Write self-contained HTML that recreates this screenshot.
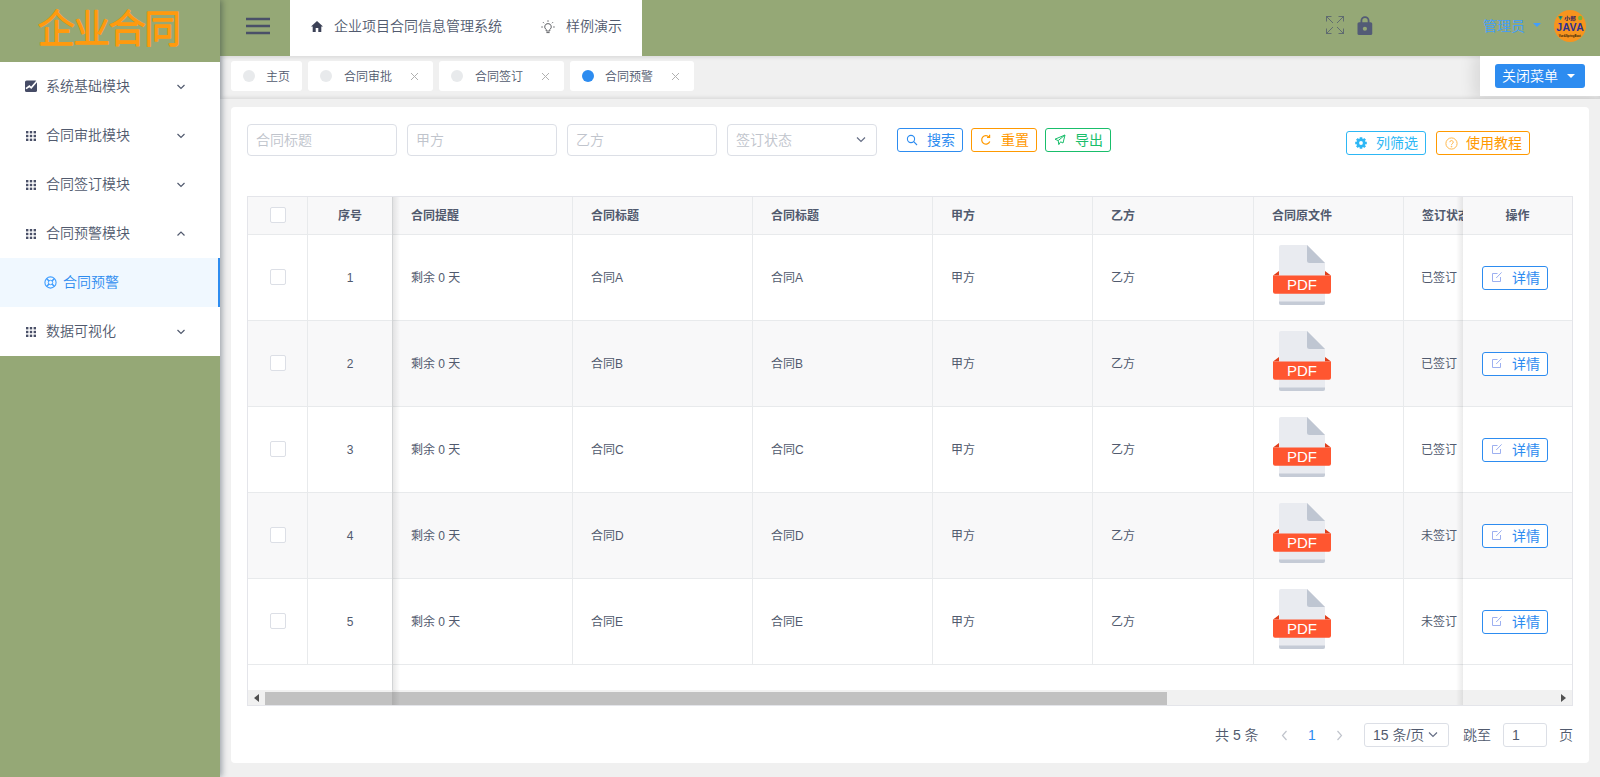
<!DOCTYPE html>
<html lang="zh-CN">
<head>
<meta charset="utf-8">
<title>企业项目合同信息管理系统</title>
<style>
*{box-sizing:border-box;margin:0;padding:0}
html,body{width:1600px;height:777px;overflow:hidden}
body{font-family:"Liberation Sans","Noto Sans CJK SC",sans-serif;font-weight:350;font-size:14px;color:#606266;background:#f0f0f0;position:relative}
.abs{position:absolute}
/* sidebar */
#side{position:absolute;left:0;top:0;width:220px;height:777px;background:#95a876;box-shadow:2px 0 6px rgba(0,21,41,.35);z-index:20}
#logo{position:absolute;left:0;top:0;width:220px;height:62px;text-align:center;line-height:0;font-size:0;color:#ff9a0e;font-family:"Liberation Sans","WenQuanYi Zen Hei","Noto Sans CJK SC",sans-serif;letter-spacing:-1px}
#menu{position:absolute;left:0;top:62px;width:220px;height:294px;background:#fff}
.mi{position:absolute;left:0;width:220px;height:49px;line-height:49px;font-size:14px;color:#515a6e}
.mi .tx{position:absolute;left:46px;top:0}
.mi svg.ic{position:absolute;left:25px;top:19px}
.mi svg.ar{position:absolute;left:176px;top:20px}
.mi.sub{background:#ecf5ff;color:#2d8cf0;border-right:2px solid #2d8cf0;background:#f0f8ff}
.mi.sub .tx{left:63px}
/* header */
#top{position:absolute;left:220px;top:0;width:1380px;height:56px;background:#95a876;z-index:10}
#nav{position:absolute;left:70px;top:0;width:352px;height:56px;background:#fff;font-size:14px;color:#515a6e;line-height:52px}
/* tags */
#tags{position:absolute;left:220px;top:56px;width:1380px;height:43px;background:#f0f0f0;box-shadow:inset 0 0 3px 2px rgba(100,100,100,.13);overflow:hidden}
.tag{position:absolute;top:5px;height:30px;background:#fff;border-radius:3px;font-size:12px;color:#515a6e;line-height:30px}
.tag .dot{position:absolute;left:12px;top:9px;width:12px;height:12px;border-radius:50%;background:#e8eaec}
.tag .dot.on{background:#2d8cf0}
.tag .t{position:absolute;top:1px}
.tag svg{position:absolute;top:11px}
#tagr{position:absolute;left:1260px;top:0;width:120px;height:40px;background:#fff;box-shadow:-3px 0 15px 3px rgba(0,0,0,.1)}
#closebtn{position:absolute;left:15px;top:8px;width:90px;height:24px;background:#2d8cf0;border-radius:3px;color:#fff;font-size:14px;line-height:24px}
/* card */
#card{position:absolute;left:231px;top:107px;width:1358px;height:656px;background:#fff;border-radius:4px}
.inp{position:absolute;top:124px;height:32px;width:150px;border:1px solid #dcdfe6;border-radius:4px;background:#fff;font-size:14px;color:#c0c4cc;line-height:30px;padding-left:8px}
.btn{position:absolute;height:24px;border:1px solid;border-radius:3px;background:#fff;font-size:14px;line-height:22px;font-weight:400}
.btn .t{position:absolute;top:0}
.btn svg{position:absolute}
/* table */
#tbl{position:absolute;left:247px;top:196px;width:1326px;height:510px;border:1px solid #e4e5ea;background:#fff;overflow:hidden}
.row{position:absolute;left:0;width:1324px;height:86px;border-bottom:1px solid #e8eaec;background:#fff}
.row.alt{background:#f8f8f9}
.hd{position:absolute;left:0;top:0;width:1324px;height:38px;background:#f8f8f9;border-bottom:1px solid #e8eaec;font-weight:bold;color:#515a6e;font-size:12px}
.c{position:absolute;top:0;height:100%;border-right:1px solid #e8eaec;font-size:12px;color:#515a6e;padding-left:18px;display:flex;align-items:center;line-height:18px;font-weight:400}
.hd .c{color:#515a6e;padding-bottom:0;font-weight:bold}
.hd .c9{padding-left:18px}
.c.ctr{padding-left:0;justify-content:center}
.cb{width:16px;height:16px;border:1px solid #dcdfe6;border-radius:2px;background:#fff;position:relative;top:-1px}
.pdf{position:absolute;left:19px;top:10px}
.row .c{padding-bottom:0}
.row .c10{padding-right:5px;padding-bottom:0}
.c1{left:0;width:60px}.c2{left:60px;width:85px}.c3{left:145px;width:180px}.c4{left:325px;width:180px}.c5{left:505px;width:180px}.c6{left:685px;width:160px}.c7{left:845px;width:161px}.c8{left:1006px;width:150px}.c9{left:1156px;width:120px;white-space:nowrap;overflow:hidden;padding-left:17px}.c10{left:1215px;width:109px;border-right:none;background:inherit;z-index:2}
.det{width:66px;height:24px;border:1px solid #2d8cf0;border-radius:3px;color:#2d8cf0;font-size:14px;position:relative;line-height:22px;background:#fff}
.det .t{position:absolute;left:29px;top:0}
.det svg{position:absolute;left:8px;top:4px}
#fixl{position:absolute;left:392px;top:197px;width:8px;height:508px;background:linear-gradient(to right,rgba(0,0,0,.10),rgba(0,0,0,0));pointer-events:none}
#fixr{position:absolute;left:1456px;top:197px;width:7px;height:508px;background:linear-gradient(to left,rgba(0,0,0,.08),rgba(0,0,0,0));pointer-events:none}
#sb{position:absolute;left:0;top:493px;width:1324px;height:15px;background:#f1f1f1}
#sbt{position:absolute;left:17px;top:2px;width:902px;height:13px;background:#c1c1c1}
/* pagination */
.pg{position:absolute;font-size:14px;color:#515a6e;line-height:24px;top:723px;white-space:nowrap}
.pbox{position:absolute;top:723px;height:24px;border:1px solid #dcdfe6;border-radius:3px;background:#fff;font-size:14px;color:#515a6e;line-height:22px}
</style>
</head>
<body>

<!-- SIDEBAR -->
<div id="side">
  <div id="logo"><svg width="220" height="62" viewBox="0 0 220 62"><text x="109" y="42" text-anchor="middle" font-family="Noto Sans CJK SC, sans-serif" font-size="38" font-weight="300" textLength="142" lengthAdjust="spacingAndGlyphs" fill="#ff9a0e" stroke="#ff9a0e" stroke-width="2" stroke-linejoin="round" stroke-linecap="round">企业合同</text></svg></div>
  <div id="menu">
    <div class="mi" style="top:0"><svg class="ic" style="top:18px" width="13" height="13" viewBox="0 0 13 13"><rect x="0" y="0.5" width="12" height="11.6" rx="1.6" fill="#464c66"/><path d="M1 8.6 L4.4 6.2 L6.2 7.8 L12 1" stroke="#fff" stroke-width="1.7" fill="none"/></svg><span class="tx">系统基础模块</span><svg class="ar" width="10" height="10" viewBox="0 0 10 10"><path d="M1.5 3 L5 6.5 L8.5 3" stroke="#515a6e" stroke-width="1.2" fill="none"/></svg></div>
    <div class="mi" style="top:49px"><svg class="ic" width="12" height="12" viewBox="0 0 12 12" fill="#4a5068"><rect x="1" y="1" width="2.4" height="2.4"/><rect x="4.8" y="1" width="2.4" height="2.4"/><rect x="8.6" y="1" width="2.4" height="2.4"/><rect x="1" y="4.8" width="2.4" height="2.4"/><rect x="4.8" y="4.8" width="2.4" height="2.4"/><rect x="8.6" y="4.8" width="2.4" height="2.4"/><rect x="1" y="8.6" width="2.4" height="2.4"/><rect x="4.8" y="8.6" width="2.4" height="2.4"/><rect x="8.6" y="8.6" width="2.4" height="2.4"/></svg><span class="tx">合同审批模块</span><svg class="ar" width="10" height="10" viewBox="0 0 10 10"><path d="M1.5 3 L5 6.5 L8.5 3" stroke="#515a6e" stroke-width="1.2" fill="none"/></svg></div>
    <div class="mi" style="top:98px"><svg class="ic" width="12" height="12" viewBox="0 0 12 12" fill="#4a5068"><rect x="1" y="1" width="2.4" height="2.4"/><rect x="4.8" y="1" width="2.4" height="2.4"/><rect x="8.6" y="1" width="2.4" height="2.4"/><rect x="1" y="4.8" width="2.4" height="2.4"/><rect x="4.8" y="4.8" width="2.4" height="2.4"/><rect x="8.6" y="4.8" width="2.4" height="2.4"/><rect x="1" y="8.6" width="2.4" height="2.4"/><rect x="4.8" y="8.6" width="2.4" height="2.4"/><rect x="8.6" y="8.6" width="2.4" height="2.4"/></svg><span class="tx">合同签订模块</span><svg class="ar" width="10" height="10" viewBox="0 0 10 10"><path d="M1.5 3 L5 6.5 L8.5 3" stroke="#515a6e" stroke-width="1.2" fill="none"/></svg></div>
    <div class="mi" style="top:147px"><svg class="ic" width="12" height="12" viewBox="0 0 12 12" fill="#4a5068"><rect x="1" y="1" width="2.4" height="2.4"/><rect x="4.8" y="1" width="2.4" height="2.4"/><rect x="8.6" y="1" width="2.4" height="2.4"/><rect x="1" y="4.8" width="2.4" height="2.4"/><rect x="4.8" y="4.8" width="2.4" height="2.4"/><rect x="8.6" y="4.8" width="2.4" height="2.4"/><rect x="1" y="8.6" width="2.4" height="2.4"/><rect x="4.8" y="8.6" width="2.4" height="2.4"/><rect x="8.6" y="8.6" width="2.4" height="2.4"/></svg><span class="tx">合同预警模块</span><svg class="ar" width="10" height="10" viewBox="0 0 10 10"><path d="M1.5 6.5 L5 3 L8.5 6.5" stroke="#515a6e" stroke-width="1.2" fill="none"/></svg></div>
    <div class="mi sub" style="top:196px"><svg class="ic" style="left:44px;top:18px" width="13" height="13" viewBox="0 0 13 13"><circle cx="6.5" cy="6.5" r="5.6" fill="none" stroke="#409eff" stroke-width="1.1"/><circle cx="6.5" cy="6.5" r="2.2" fill="none" stroke="#409eff" stroke-width="1"/><path d="M2.8 2.8 L5 5 M10.2 2.8 L8 5 M2.8 10.2 L5 8 M10.2 10.2 L8 8" stroke="#409eff" stroke-width="1.6"/></svg><span class="tx">合同预警</span></div>
    <div class="mi" style="top:245px"><svg class="ic" width="12" height="12" viewBox="0 0 12 12" fill="#4a5068"><rect x="1" y="1" width="2.4" height="2.4"/><rect x="4.8" y="1" width="2.4" height="2.4"/><rect x="8.6" y="1" width="2.4" height="2.4"/><rect x="1" y="4.8" width="2.4" height="2.4"/><rect x="4.8" y="4.8" width="2.4" height="2.4"/><rect x="8.6" y="4.8" width="2.4" height="2.4"/><rect x="1" y="8.6" width="2.4" height="2.4"/><rect x="4.8" y="8.6" width="2.4" height="2.4"/><rect x="8.6" y="8.6" width="2.4" height="2.4"/></svg><span class="tx">数据可视化</span><svg class="ar" width="10" height="10" viewBox="0 0 10 10"><path d="M1.5 3 L5 6.5 L8.5 3" stroke="#515a6e" stroke-width="1.2" fill="none"/></svg></div>
  </div>
</div>

<!-- HEADER -->
<div id="top">
  <svg class="abs" style="left:26px;top:17px" width="24" height="18" viewBox="0 0 24 18"><path d="M0 2 H24 M0 9 H24 M0 16 H24" stroke="#4a5068" stroke-width="2.4"/></svg>
  <div id="nav">
    <svg class="abs" style="left:21px;top:21px" width="12" height="11" viewBox="0 0 12 11"><path d="M6 0 L12 5.5 H10.3 V11 H7.3 V7 H4.7 V11 H1.7 V5.5 H0 Z" fill="#3c4257"/></svg>
    <span class="abs" style="left:44px;top:0">企业项目合同信息管理系统</span>
    <svg class="abs" style="left:251px;top:20px" width="14" height="15" viewBox="0 0 14 15" fill="none" stroke="#606266" stroke-width="1"><path d="M7 3.6 a3.2 3.2 0 0 1 1.8 5.9 V11 H5.2 V9.5 A3.2 3.2 0 0 1 7 3.6 Z"/><path d="M5.4 12.6 H8.6 M7 0.3 V1.8 M2 2.2 L3 3.2 M12 2.2 L11 3.2 M0.3 7 H1.8 M12.2 7 H13.7"/></svg>
    <span class="abs" style="left:276px;top:0">样例演示</span>
  </div>
  <!-- right icons -->
  <svg class="abs" style="left:1105px;top:15px" width="20" height="20" viewBox="0 0 20 20" fill="none" stroke="rgba(74,82,110,.7)" stroke-width="1"><path d="M1.5 6.5 V1.5 H6.5 M1.5 1.5 L8 8 M13.5 1.5 H18.5 V6.5 M18.5 1.5 L12 8 M1.5 13.5 V18.5 H6.5 M1.5 18.5 L8 12 M18.5 13.5 V18.5 H13.5 M18.5 18.5 L12 12"/></svg>
  <svg class="abs" style="left:1137px;top:16px" width="16" height="20" viewBox="0 0 16 20"><path d="M4.4 7 V4.7 a3.6 3.6 0 0 1 7.2 0 V7" fill="none" stroke="#535b76" stroke-width="1.8"/><rect x="0.5" y="6.25" width="14.75" height="12.75" rx="1.6" fill="#535b76"/><circle cx="7.9" cy="12.75" r="2.1" fill="#95a876"/></svg>
  <span class="abs" style="left:1263px;top:0;line-height:52px;color:#409eff;font-size:14px">管理员</span>
  <svg class="abs" style="left:1313px;top:23px" width="8" height="4" viewBox="0 0 8 4"><path d="M0 0 H8 L4 4 Z" fill="#409eff"/></svg>
  <svg class="abs" style="left:1334px;top:10px" width="32" height="32" viewBox="0 0 32 32"><circle cx="16" cy="16" r="16" fill="#f7941e"/><path d="M4.1 6.2 H8.9 L6.5 10.2 Z" fill="#1aa579"/><path d="M5.3 6.2 H7.7 L6.5 8.2 Z" fill="#2c4a6e"/><circle cx="26.2" cy="8" r="2.2" fill="#7ab43c"/><text x="16.1" y="9.9" text-anchor="middle" font-family="Liberation Sans, Noto Sans CJK SC, sans-serif" font-weight="bold" font-size="4.6" textLength="11.5" lengthAdjust="spacingAndGlyphs" fill="#1b1464">小郑</text><text x="16" y="20.8" text-anchor="middle" font-family="Liberation Sans, sans-serif" font-weight="bold" font-size="10.5" textLength="27.6" lengthAdjust="spacing" fill="#2e3192">JAVA</text><text x="15.7" y="26.8" text-anchor="middle" font-family="Liberation Sans, sans-serif" font-weight="bold" font-size="3" textLength="22" lengthAdjust="spacingAndGlyphs" fill="#2a1a0a">Vue&amp;SpringBoot</text></svg>
</div>

<!-- TAGS -->
<div id="tags">
  <div class="tag" style="left:11px;width:71px"><i class="dot"></i><span class="t" style="left:35px">主页</span></div>
  <div class="tag" style="left:88px;width:125px"><i class="dot"></i><span class="t" style="left:36px">合同审批</span><svg style="left:102px" width="9" height="9" viewBox="0 0 9 9"><path d="M1 1 L8 8 M8 1 L1 8" stroke="#b0b0b0" stroke-width="1"/></svg></div>
  <div class="tag" style="left:219px;width:125px"><i class="dot"></i><span class="t" style="left:36px">合同签订</span><svg style="left:102px" width="9" height="9" viewBox="0 0 9 9"><path d="M1 1 L8 8 M8 1 L1 8" stroke="#b0b0b0" stroke-width="1"/></svg></div>
  <div class="tag" style="left:350px;width:124px"><i class="dot on"></i><span class="t" style="left:35px">合同预警</span><svg style="left:101px" width="9" height="9" viewBox="0 0 9 9"><path d="M1 1 L8 8 M8 1 L1 8" stroke="#b0b0b0" stroke-width="1"/></svg></div>
  <div id="tagr"><div id="closebtn"><span class="abs" style="left:7px;top:0">关闭菜单</span><svg class="abs" style="left:72px;top:10px" width="8" height="4" viewBox="0 0 8 4"><path d="M0 0 H8 L4 4 Z" fill="#fff"/></svg></div></div>
</div>

<!-- CARD -->
<div id="card"></div>
<div class="inp" style="left:247px">合同标题</div>
<div class="inp" style="left:407px">甲方</div>
<div class="inp" style="left:567px">乙方</div>
<div class="inp" style="left:727px">签订状态<svg class="abs" style="left:128px;top:11px" width="10" height="8" viewBox="0 0 10 8"><path d="M1 1.5 L5 5.5 L9 1.5" stroke="#666e85" stroke-width="1.2" fill="none"/></svg></div>

<div class="btn" style="left:897px;top:128px;width:66px;border-color:#2d8cf0;color:#2d8cf0"><svg style="left:8px;top:5px" width="12" height="12" viewBox="0 0 12 12" fill="none" stroke="#2d8cf0" stroke-width="1.1"><circle cx="5" cy="5" r="3.6"/><path d="M7.7 7.7 L11 11"/></svg><span class="t" style="left:29px">搜索</span></div>
<div class="btn" style="left:971px;top:128px;width:66px;border-color:#ff9900;color:#ff9900"><svg style="left:8px;top:5px" width="12" height="12" viewBox="0 0 12 12" fill="none" stroke="#ff9900" stroke-width="1.2"><path d="M9.8 7.5 A4.2 4.2 0 1 1 9 3"/><path d="M9.6 0.8 V3.4 H7" /></svg><span class="t" style="left:29px">重置</span></div>
<div class="btn" style="left:1045px;top:128px;width:66px;border-color:#19be6b;color:#19be6b"><svg style="left:8px;top:5px" width="12" height="12" viewBox="0 0 12 12" fill="none" stroke="#19be6b" stroke-width="1"><path d="M11 1 L1 5.2 L4.2 6.6 L4.8 10.6 L6.6 7.8 L9 9 Z M4.2 6.6 L11 1"/></svg><span class="t" style="left:29px">导出</span></div>
<div class="btn" style="left:1346px;top:131px;width:80px;border-color:#2db7f5;color:#2db7f5"><svg style="left:8px;top:5px" width="12" height="12" viewBox="0 0 12 12"><g fill="#2db7f5"><circle cx="6" cy="6" r="4.5"/><g stroke="#2db7f5" stroke-width="2.6"><path d="M6 0.2 V11.8 M0.2 6 H11.8 M1.9 1.9 L10.1 10.1 M10.1 1.9 L1.9 10.1"/></g></g><circle cx="6" cy="6" r="1.9" fill="#fff"/></svg><span class="t" style="left:29px">列筛选</span></div>
<div class="btn" style="left:1436px;top:131px;width:94px;border-color:#ff9900;color:#ff9900"><svg style="left:8px;top:5px" width="13" height="13" viewBox="0 0 13 13" fill="none" stroke="#ffb84d" stroke-width="1"><circle cx="6.5" cy="6.5" r="5.6"/><path d="M4.8 5.2 a1.7 1.7 0 1 1 2.4 1.6 q-0.7 0.4 -0.7 1.2"/><circle cx="6.5" cy="9.6" r="0.4" fill="#ffb84d"/></svg><span class="t" style="left:29px">使用教程</span></div>

<!-- TABLE -->
<div id="tbl">
  <div class="hd"><div class="c c1 ctr"><i class="cb"></i></div><div class="c c2 ctr">序号</div><div class="c c3">合同提醒</div><div class="c c4">合同标题</div><div class="c c5">合同标题</div><div class="c c6">甲方</div><div class="c c7">乙方</div><div class="c c8">合同原文件</div><div class="c c9">签订状态</div><div class="c c10 ctr">操作</div></div>
<!--ROWS-->
  <div class="row" style="top:38px"><div class="c c1 ctr"><i class="cb"></i></div><div class="c c2 ctr">1</div><div class="c c3">剩余 0 天</div><div class="c c4">合同A</div><div class="c c5">合同A</div><div class="c c6">甲方</div><div class="c c7">乙方</div><div class="c c8"><svg class="pdf" width="58" height="60" viewBox="0 0 58 60"><path d="M8 0 H34 L52 18 V58 a2 2 0 0 1 -2 2 H8 a2 2 0 0 1 -2 -2 V2 a2 2 0 0 1 2 -2 Z" fill="#e9ebf0"/><path d="M6 56.5 H52 V58 a2 2 0 0 1 -2 2 H8 a2 2 0 0 1 -2 -2 Z" fill="#c5cbd6"/><path d="M34 0 L52 18 H36.5 a2.5 2.5 0 0 1 -2.5 -2.5 Z" fill="#bfc6d2"/><path d="M0 30.6 L6 26 V30.6 Z M58 30.6 L52 26 V30.6 Z" fill="#e0401c"/><path d="M0 30.6 H58 V46.7 a2 2 0 0 1 -2 2 H2 a2 2 0 0 1 -2 -2 Z" fill="#ff5630"/><text x="29" y="45" text-anchor="middle" font-family="Liberation Sans, sans-serif" font-size="15" fill="#fff">PDF</text></svg></div><div class="c c9">已签订</div><div class="c c10 ctr"><div class="det"><svg width="12" height="12" viewBox="0 0 12 12" fill="none" stroke="#9db0f0" stroke-width="1"><path d="M9.5 6 V10.5 H1.5 V2.5 H6.5"/><path d="M5.2 7 L10.6 1.4" stroke="#9db0f0"/></svg><span class="t">详情</span></div></div></div>
  <div class="row alt" style="top:124px"><div class="c c1 ctr"><i class="cb"></i></div><div class="c c2 ctr">2</div><div class="c c3">剩余 0 天</div><div class="c c4">合同B</div><div class="c c5">合同B</div><div class="c c6">甲方</div><div class="c c7">乙方</div><div class="c c8"><svg class="pdf" width="58" height="60" viewBox="0 0 58 60"><path d="M8 0 H34 L52 18 V58 a2 2 0 0 1 -2 2 H8 a2 2 0 0 1 -2 -2 V2 a2 2 0 0 1 2 -2 Z" fill="#e9ebf0"/><path d="M6 56.5 H52 V58 a2 2 0 0 1 -2 2 H8 a2 2 0 0 1 -2 -2 Z" fill="#c5cbd6"/><path d="M34 0 L52 18 H36.5 a2.5 2.5 0 0 1 -2.5 -2.5 Z" fill="#bfc6d2"/><path d="M0 30.6 L6 26 V30.6 Z M58 30.6 L52 26 V30.6 Z" fill="#e0401c"/><path d="M0 30.6 H58 V46.7 a2 2 0 0 1 -2 2 H2 a2 2 0 0 1 -2 -2 Z" fill="#ff5630"/><text x="29" y="45" text-anchor="middle" font-family="Liberation Sans, sans-serif" font-size="15" fill="#fff">PDF</text></svg></div><div class="c c9">已签订</div><div class="c c10 ctr"><div class="det"><svg width="12" height="12" viewBox="0 0 12 12" fill="none" stroke="#9db0f0" stroke-width="1"><path d="M9.5 6 V10.5 H1.5 V2.5 H6.5"/><path d="M5.2 7 L10.6 1.4" stroke="#9db0f0"/></svg><span class="t">详情</span></div></div></div>
  <div class="row" style="top:210px"><div class="c c1 ctr"><i class="cb"></i></div><div class="c c2 ctr">3</div><div class="c c3">剩余 0 天</div><div class="c c4">合同C</div><div class="c c5">合同C</div><div class="c c6">甲方</div><div class="c c7">乙方</div><div class="c c8"><svg class="pdf" width="58" height="60" viewBox="0 0 58 60"><path d="M8 0 H34 L52 18 V58 a2 2 0 0 1 -2 2 H8 a2 2 0 0 1 -2 -2 V2 a2 2 0 0 1 2 -2 Z" fill="#e9ebf0"/><path d="M6 56.5 H52 V58 a2 2 0 0 1 -2 2 H8 a2 2 0 0 1 -2 -2 Z" fill="#c5cbd6"/><path d="M34 0 L52 18 H36.5 a2.5 2.5 0 0 1 -2.5 -2.5 Z" fill="#bfc6d2"/><path d="M0 30.6 L6 26 V30.6 Z M58 30.6 L52 26 V30.6 Z" fill="#e0401c"/><path d="M0 30.6 H58 V46.7 a2 2 0 0 1 -2 2 H2 a2 2 0 0 1 -2 -2 Z" fill="#ff5630"/><text x="29" y="45" text-anchor="middle" font-family="Liberation Sans, sans-serif" font-size="15" fill="#fff">PDF</text></svg></div><div class="c c9">已签订</div><div class="c c10 ctr"><div class="det"><svg width="12" height="12" viewBox="0 0 12 12" fill="none" stroke="#9db0f0" stroke-width="1"><path d="M9.5 6 V10.5 H1.5 V2.5 H6.5"/><path d="M5.2 7 L10.6 1.4" stroke="#9db0f0"/></svg><span class="t">详情</span></div></div></div>
  <div class="row alt" style="top:296px"><div class="c c1 ctr"><i class="cb"></i></div><div class="c c2 ctr">4</div><div class="c c3">剩余 0 天</div><div class="c c4">合同D</div><div class="c c5">合同D</div><div class="c c6">甲方</div><div class="c c7">乙方</div><div class="c c8"><svg class="pdf" width="58" height="60" viewBox="0 0 58 60"><path d="M8 0 H34 L52 18 V58 a2 2 0 0 1 -2 2 H8 a2 2 0 0 1 -2 -2 V2 a2 2 0 0 1 2 -2 Z" fill="#e9ebf0"/><path d="M6 56.5 H52 V58 a2 2 0 0 1 -2 2 H8 a2 2 0 0 1 -2 -2 Z" fill="#c5cbd6"/><path d="M34 0 L52 18 H36.5 a2.5 2.5 0 0 1 -2.5 -2.5 Z" fill="#bfc6d2"/><path d="M0 30.6 L6 26 V30.6 Z M58 30.6 L52 26 V30.6 Z" fill="#e0401c"/><path d="M0 30.6 H58 V46.7 a2 2 0 0 1 -2 2 H2 a2 2 0 0 1 -2 -2 Z" fill="#ff5630"/><text x="29" y="45" text-anchor="middle" font-family="Liberation Sans, sans-serif" font-size="15" fill="#fff">PDF</text></svg></div><div class="c c9">未签订</div><div class="c c10 ctr"><div class="det"><svg width="12" height="12" viewBox="0 0 12 12" fill="none" stroke="#9db0f0" stroke-width="1"><path d="M9.5 6 V10.5 H1.5 V2.5 H6.5"/><path d="M5.2 7 L10.6 1.4" stroke="#9db0f0"/></svg><span class="t">详情</span></div></div></div>
  <div class="row" style="top:382px"><div class="c c1 ctr"><i class="cb"></i></div><div class="c c2 ctr">5</div><div class="c c3">剩余 0 天</div><div class="c c4">合同E</div><div class="c c5">合同E</div><div class="c c6">甲方</div><div class="c c7">乙方</div><div class="c c8"><svg class="pdf" width="58" height="60" viewBox="0 0 58 60"><path d="M8 0 H34 L52 18 V58 a2 2 0 0 1 -2 2 H8 a2 2 0 0 1 -2 -2 V2 a2 2 0 0 1 2 -2 Z" fill="#e9ebf0"/><path d="M6 56.5 H52 V58 a2 2 0 0 1 -2 2 H8 a2 2 0 0 1 -2 -2 Z" fill="#c5cbd6"/><path d="M34 0 L52 18 H36.5 a2.5 2.5 0 0 1 -2.5 -2.5 Z" fill="#bfc6d2"/><path d="M0 30.6 L6 26 V30.6 Z M58 30.6 L52 26 V30.6 Z" fill="#e0401c"/><path d="M0 30.6 H58 V46.7 a2 2 0 0 1 -2 2 H2 a2 2 0 0 1 -2 -2 Z" fill="#ff5630"/><text x="29" y="45" text-anchor="middle" font-family="Liberation Sans, sans-serif" font-size="15" fill="#fff">PDF</text></svg></div><div class="c c9">未签订</div><div class="c c10 ctr"><div class="det"><svg width="12" height="12" viewBox="0 0 12 12" fill="none" stroke="#9db0f0" stroke-width="1"><path d="M9.5 6 V10.5 H1.5 V2.5 H6.5"/><path d="M5.2 7 L10.6 1.4" stroke="#9db0f0"/></svg><span class="t">详情</span></div></div></div>
  <div class="abs" style="left:0;top:468px;width:145px;height:39px;border-right:1px solid #e8eaec"></div>
  <div id="sb"><div id="sbt"></div><svg class="abs" style="left:6px;top:4px" width="5" height="8" viewBox="0 0 5 8"><path d="M5 0 V8 L0 4 Z" fill="#505050"/></svg><svg class="abs" style="left:1313px;top:4px" width="5" height="8" viewBox="0 0 5 8"><path d="M0 0 V8 L5 4 Z" fill="#505050"/></svg></div>
  <div class="abs" style="left:1215px;top:468px;width:109px;height:39px;background:rgba(255,255,255,0.0)"></div>
<!--/ROWS-->
</div>

<div id="fixl"></div><div id="fixr"></div>
<!-- PAGINATION -->
<span class="pg" style="left:1215px">共 5 条</span>
<svg class="abs" style="left:1281px;top:730px" width="7" height="11" viewBox="0 0 7 11"><path d="M5.5 1 L1.5 5.5 L5.5 10" stroke="#c0c4cc" stroke-width="1.2" fill="none"/></svg>
<span class="pg" style="left:1308px;color:#2d8cf0">1</span>
<svg class="abs" style="left:1336px;top:730px" width="7" height="11" viewBox="0 0 7 11"><path d="M1.5 1 L5.5 5.5 L1.5 10" stroke="#c0c4cc" stroke-width="1.2" fill="none"/></svg>
<div class="pbox" style="left:1364px;width:85px"><span class="abs" style="left:8px;top:0">15 条/页</span><svg class="abs" style="left:63px;top:7px" width="10" height="8" viewBox="0 0 10 8"><path d="M1 1.5 L5 5.5 L9 1.5" stroke="#666e85" stroke-width="1.2" fill="none"/></svg></div>
<span class="pg" style="left:1463px">跳至</span>
<div class="pbox" style="left:1503px;width:44px"><span class="abs" style="left:8px;top:0">1</span></div>
<span class="pg" style="left:1559px">页</span>

</body>
</html>
